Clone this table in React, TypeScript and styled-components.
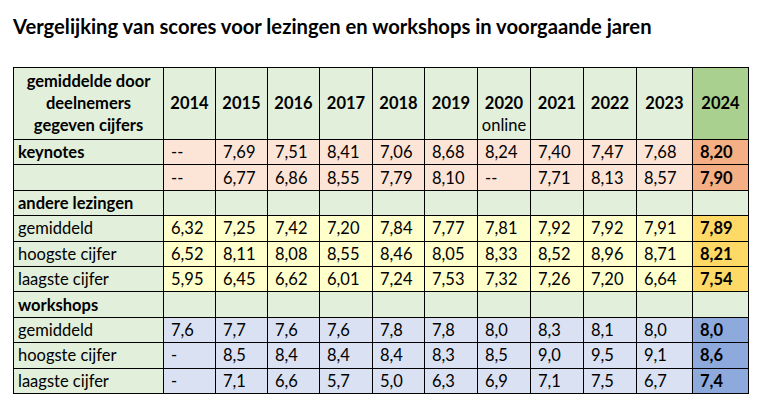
import React, { FC } from 'react'
import styled, { createGlobalStyle } from 'styled-components'

const GlobalStyle = createGlobalStyle`
    body {
        margin: 0;
        background: #ffffff;
        font-family: Lato, "Open Sans", sans-serif;
        color: #000000;
    }
`

type Tone = 'pink' | 'yellow' | 'blue'

const colors = {
    green: '#e2efda',
    greenDark: '#a9d08e',
    pink: '#fce4d6',
    pinkDark: '#f4b084',
    yellow: '#ffffcc',
    yellowDark: '#ffd966',
    blue: '#d9e1f2',
    blueDark: '#8ea9db',
}

const dark: Record<Tone, string> = {
    pink: colors.pinkDark,
    yellow: colors.yellowDark,
    blue: colors.blueDark,
}

const years = ['2014', '2015', '2016', '2017', '2018', '2019', '2020', '2021', '2022', '2023', '2024']
const widths = [150, 52, 52, 52, 53, 52, 53, 53, 53, 53, 56, 56]

interface DataRow {
    label: string;
    bold?: boolean;
    values: string[];
}

interface Section {
    title?: string;
    tone: Tone;
    rows: DataRow[];
}

const sections: Section[] = [
    {
        tone: 'pink',
        rows: [
            { label: 'keynotes', bold: true, values: ['--', '7,69', '7,51', '8,41', '7,06', '8,68', '8,24', '7,40', '7,47', '7,68', '8,20'] },
            { label: '', values: ['--', '6,77', '6,86', '8,55', '7,79', '8,10', '--', '7,71', '8,13', '8,57', '7,90'] },
        ],
    },
    {
        title: 'andere lezingen',
        tone: 'yellow',
        rows: [
            { label: 'gemiddeld', values: ['6,32', '7,25', '7,42', '7,20', '7,84', '7,77', '7,81', '7,92', '7,92', '7,91', '7,89'] },
            { label: 'hoogste cijfer', values: ['6,52', '8,11', '8,08', '8,55', '8,46', '8,05', '8,33', '8,52', '8,96', '8,71', '8,21'] },
            { label: 'laagste cijfer', values: ['5,95', '6,45', '6,62', '6,01', '7,24', '7,53', '7,32', '7,26', '7,20', '6,64', '7,54'] },
        ],
    },
    {
        title: 'workshops',
        tone: 'blue',
        rows: [
            { label: 'gemiddeld', values: ['7,6', '7,7', '7,6', '7,6', '7,8', '7,8', '8,0', '8,3', '8,1', '8,0', '8,0'] },
            { label: 'hoogste cijfer', values: ['-', '8,5', '8,4', '8,4', '8,4', '8,3', '8,5', '9,0', '9,5', '9,1', '8,6'] },
            { label: 'laagste cijfer', values: ['-', '7,1', '6,6', '5,7', '5,0', '6,3', '6,9', '7,1', '7,5', '6,7', '7,4'] },
        ],
    },
]

const Page = styled.div`
    padding: 12px 0 0 13px;
`

const Title = styled.h1`
    margin: 0 0 27px 0;
    font-size: 20.2px;
    line-height: 28px;
    font-weight: 700;
`

const Table = styled.table`
    border-collapse: collapse;
    table-layout: fixed;
    width: 735px;
    font-size: 16.5px;
    line-height: 22px;
`

const HeadCell = styled.th<{ $latest?: boolean }>`
    padding: 24px 0 0 0;
    border: 1px solid #000;
    border-left-color: ${p => (p.$latest ? '#8c8c8c' : '#000')};
    background: ${p => (p.$latest ? colors.greenDark : colors.green)};
    font-weight: 700;
    text-align: center;
    vertical-align: top;
`

const LabelHead = styled(HeadCell)`
    padding: 2px 0 3px 0;
`

const Note = styled.div`
    font-weight: 400;
`

const Label = styled.td<{ $bold?: boolean }>`
    height: 24.4px;
    padding: 0 0 0 4px;
    border: 1px solid #000;
    background: ${colors.green};
    font-weight: ${p => (p.$bold ? 700 : 400)};
    text-align: left;
    vertical-align: middle;
    white-space: nowrap;
`

const Value = styled.td<{ $tone: Tone; $latest?: boolean }>`
    height: 24.4px;
    padding: 0 0 0 7px;
    border: 1px solid #000;
    background: ${p => (p.$latest ? dark[p.$tone] : colors[p.$tone])};
    font-weight: ${p => (p.$latest ? 700 : 400)};
    vertical-align: middle;
    white-space: nowrap;
`

const Blank = styled.td<{ $latest?: boolean }>`
    height: 24.4px;
    padding: 0;
    border: 1px solid #000;
    border-left-color: ${p => (p.$latest ? '#8c8c8c' : '#000')};
    background: ${colors.green};
`

const SectionRows: FC<{ section: Section }> = ({ section }) => (
    <>
        {section.title && (
            <tr>
                <Label $bold>{section.title}</Label>
                {years.map((y, i) => (
                    <Blank key={y} $latest={i === years.length - 1} />
                ))}
            </tr>
        )}
        {section.rows.map((row, r) => (
            <tr key={`${section.tone}${r}`}>
                <Label $bold={row.bold}>{row.label}</Label>
                {row.values.map((v, i) => (
                    <Value key={`${v}${i}`} $tone={section.tone} $latest={i === row.values.length - 1}>
                        {v}
                    </Value>
                ))}
            </tr>
        ))}
    </>
)

const App: FC = () => (
    <Page>
        <GlobalStyle />
        <Title>Vergelijking van scores voor lezingen en workshops in voorgaande jaren</Title>
        <Table>
            <colgroup>
                {widths.map((w, i) => (
                    <col key={i} style={{ width: w }} />
                ))}
            </colgroup>
            <thead>
                <tr>
                    <LabelHead>
                        gemiddelde door
                        <br />
                        deelnemers
                        <br />
                        gegeven cijfers
                    </LabelHead>
                    {years.map((y, i) => (
                        <HeadCell key={y} $latest={i === years.length - 1}>
                            {y}
                            {y === '2020' && <Note>online</Note>}
                        </HeadCell>
                    ))}
                </tr>
            </thead>
            <tbody>
                {sections.map(s => (
                    <SectionRows key={s.tone} section={s} />
                ))}
            </tbody>
        </Table>
    </Page>
)

export default App
